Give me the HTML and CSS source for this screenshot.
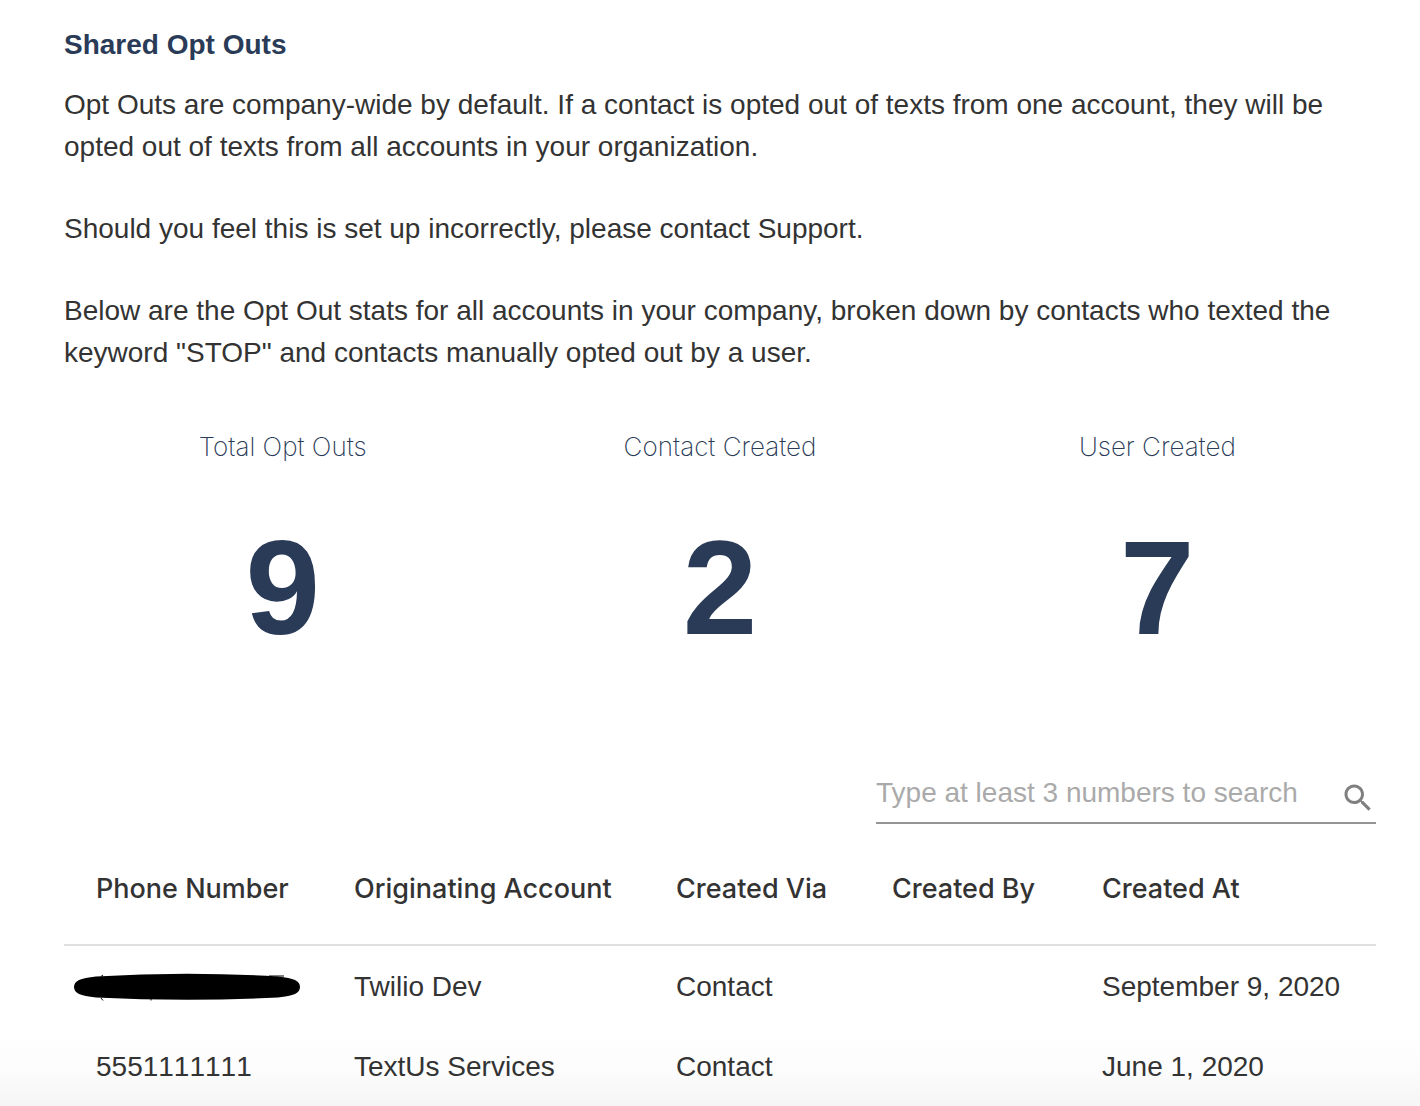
FILE: index.html
```html
<!DOCTYPE html>
<html lang="en">
<head>
  <meta charset="utf-8">
  <title>Shared Opt Outs</title>
  <link rel="stylesheet" href="styles.css">
</head>
<body>
  <main class="page">
    <section class="intro">
      <h1 class="title">Shared Opt Outs</h1>
      <p class="text">Opt Outs are company-wide by default. If a contact is opted out of texts from one account, they will be opted out of texts from all accounts in your organization.</p>
      <p class="text">Should you feel this is set up incorrectly, please contact Support.</p>
      <p class="text">Below are the Opt Out stats for all accounts in your company, broken down by contacts who texted the keyword "STOP" and contacts manually opted out by a user.</p>
    </section>

    <section class="stats">
      <div class="stat">
        <h2 class="stat-label">Total Opt Outs</h2>
        <div class="stat-value">9</div>
      </div>
      <div class="stat">
        <h2 class="stat-label">Contact Created</h2>
        <div class="stat-value">2</div>
      </div>
      <div class="stat">
        <h2 class="stat-label">User Created</h2>
        <div class="stat-value">7</div>
      </div>
    </section>

    <form class="search">
      <input class="search-input" type="text" aria-label="Search phone numbers" placeholder="Type at least 3 numbers to search">
      <button class="search-button" type="button" aria-label="Search">
        <svg class="search-icon" viewBox="0 0 24 24" aria-hidden="true"><path d="M15.5 14h-.79l-.28-.27C15.41 12.59 16 11.11 16 9.500 16 5.910 13.090 3 9.500 3S3 5.910 3 9.500 5.910 16 9.500 16c1.610 0 3.090-.59 4.230-1.570l.27.28v.79l5 4.990L20.490 19l-4.990-5zm-6 0C7.010 14 5 11.990 5 9.500S7.010 5 9.500 5 14 7.010 14 9.500 11.990 14 9.500 14z"/></svg>
      </button>
    </form>

    <table class="table">
      <colgroup>
        <col class="col-phone">
        <col class="col-account">
        <col class="col-via">
        <col class="col-by">
        <col>
      </colgroup>
      <thead>
        <tr>
          <th scope="col">Phone Number</th>
          <th scope="col">Originating Account</th>
          <th scope="col">Created Via</th>
          <th scope="col">Created By</th>
          <th scope="col">Created At</th>
        </tr>
      </thead>
      <tbody>
        <tr>
          <td class="cell-hidden">
            <svg class="redaction" viewBox="0 0 226 28" role="img" aria-label="Hidden number">
              <path d="M0 14C0 8 6 5 22 3.500Q113-2 204 3.500C220 5 226 8 226 14S220 23 204 24.500Q113 29 22 24.500C6 23 0 20 0 14Z"/>
              <path d="M27 3.500l2-1.500M27 25l2 2.500M77 26v1.500M195 3h15" fill="none" stroke="#000"/>
            </svg>
          </td>
          <td>Twilio Dev</td>
          <td>Contact</td>
          <td></td>
          <td>September 9, 2020</td>
        </tr>
        <tr>
          <td class="cell-phone">5551111111</td>
          <td>TextUs Services</td>
          <td>Contact</td>
          <td></td>
          <td>June 1, 2020</td>
        </tr>
      </tbody>
    </table>
  </main>
</body>
</html>
```
FILE: styles.css
```css
* {
  box-sizing: border-box;
}

body {
  margin: 0;
  background: #fff;
  color: #333;
  font-family: "Liberation Sans", Arial, sans-serif;
  font-size: 28px;
  line-height: 42px;
}

.page {
  min-height: 100vh;
  padding: 24px 44px 0 64px;
  background: linear-gradient(to top, #f5f5f5, #fcfcfc 36px, #fff 72px);
}

.title {
  margin: 0 0 18px;
  color: #2a3b57;
  font-size: 28px;
  font-weight: 700;
}

.text {
  margin: 0 0 40px;
}

.stats {
  display: grid;
  grid-template-columns: repeat(3, 1fr);
  margin-top: 52px;
  color: #2a3b57;
  text-align: center;
}

.stat-label {
  margin: 0;
  font-family: Inter, "Liberation Sans", sans-serif;
  font-size: 26px;
  font-weight: 200;
}

.stat-value {
  margin-top: 40px;
  font-size: 134px;
  font-weight: 700;
  line-height: 160px;
}

.search {
  display: flex;
  align-items: center;
  width: 500px;
  margin: 96px 0 0 auto;
  border-bottom: 2px solid #949494;
}

.search-input {
  flex: 1;
  min-width: 0;
  height: 58px;
  padding: 0;
  border: 0;
  outline: 0;
  background: none;
  color: #333;
  font: inherit;
}

.search-input::placeholder {
  color: #aaa;
  opacity: 1;
}

.search-button {
  display: flex;
  padding: 10px 0 0;
  border: 0;
  background: none;
}

.search-icon {
  width: 36px;
  height: 36px;
  fill: #808080;
}

.table {
  width: 100%;
  margin-top: 8px;
  border-collapse: separate;
  border-spacing: 0;
  table-layout: fixed;
}

.col-phone {
  width: 258px;
}

.col-account {
  width: 322px;
}

.col-via {
  width: 216px;
}

.col-by {
  width: 210px;
}

.table th,
.table td {
  padding: 2px 0 0 32px;
  text-align: left;
  white-space: nowrap;
}

.table th {
  height: 114px;
  border-bottom: 2px solid #e0e0e0;
  font-family: Inter, "Liberation Sans", sans-serif;
  font-size: 27px;
  font-weight: 500;
}

.table td {
  height: 80px;
}

.table .cell-hidden {
  padding-left: 10px;
}

.cell-phone {
  font-kerning: none;
}

.redaction {
  display: block;
  width: 226px;
  height: 28px;
}
```
